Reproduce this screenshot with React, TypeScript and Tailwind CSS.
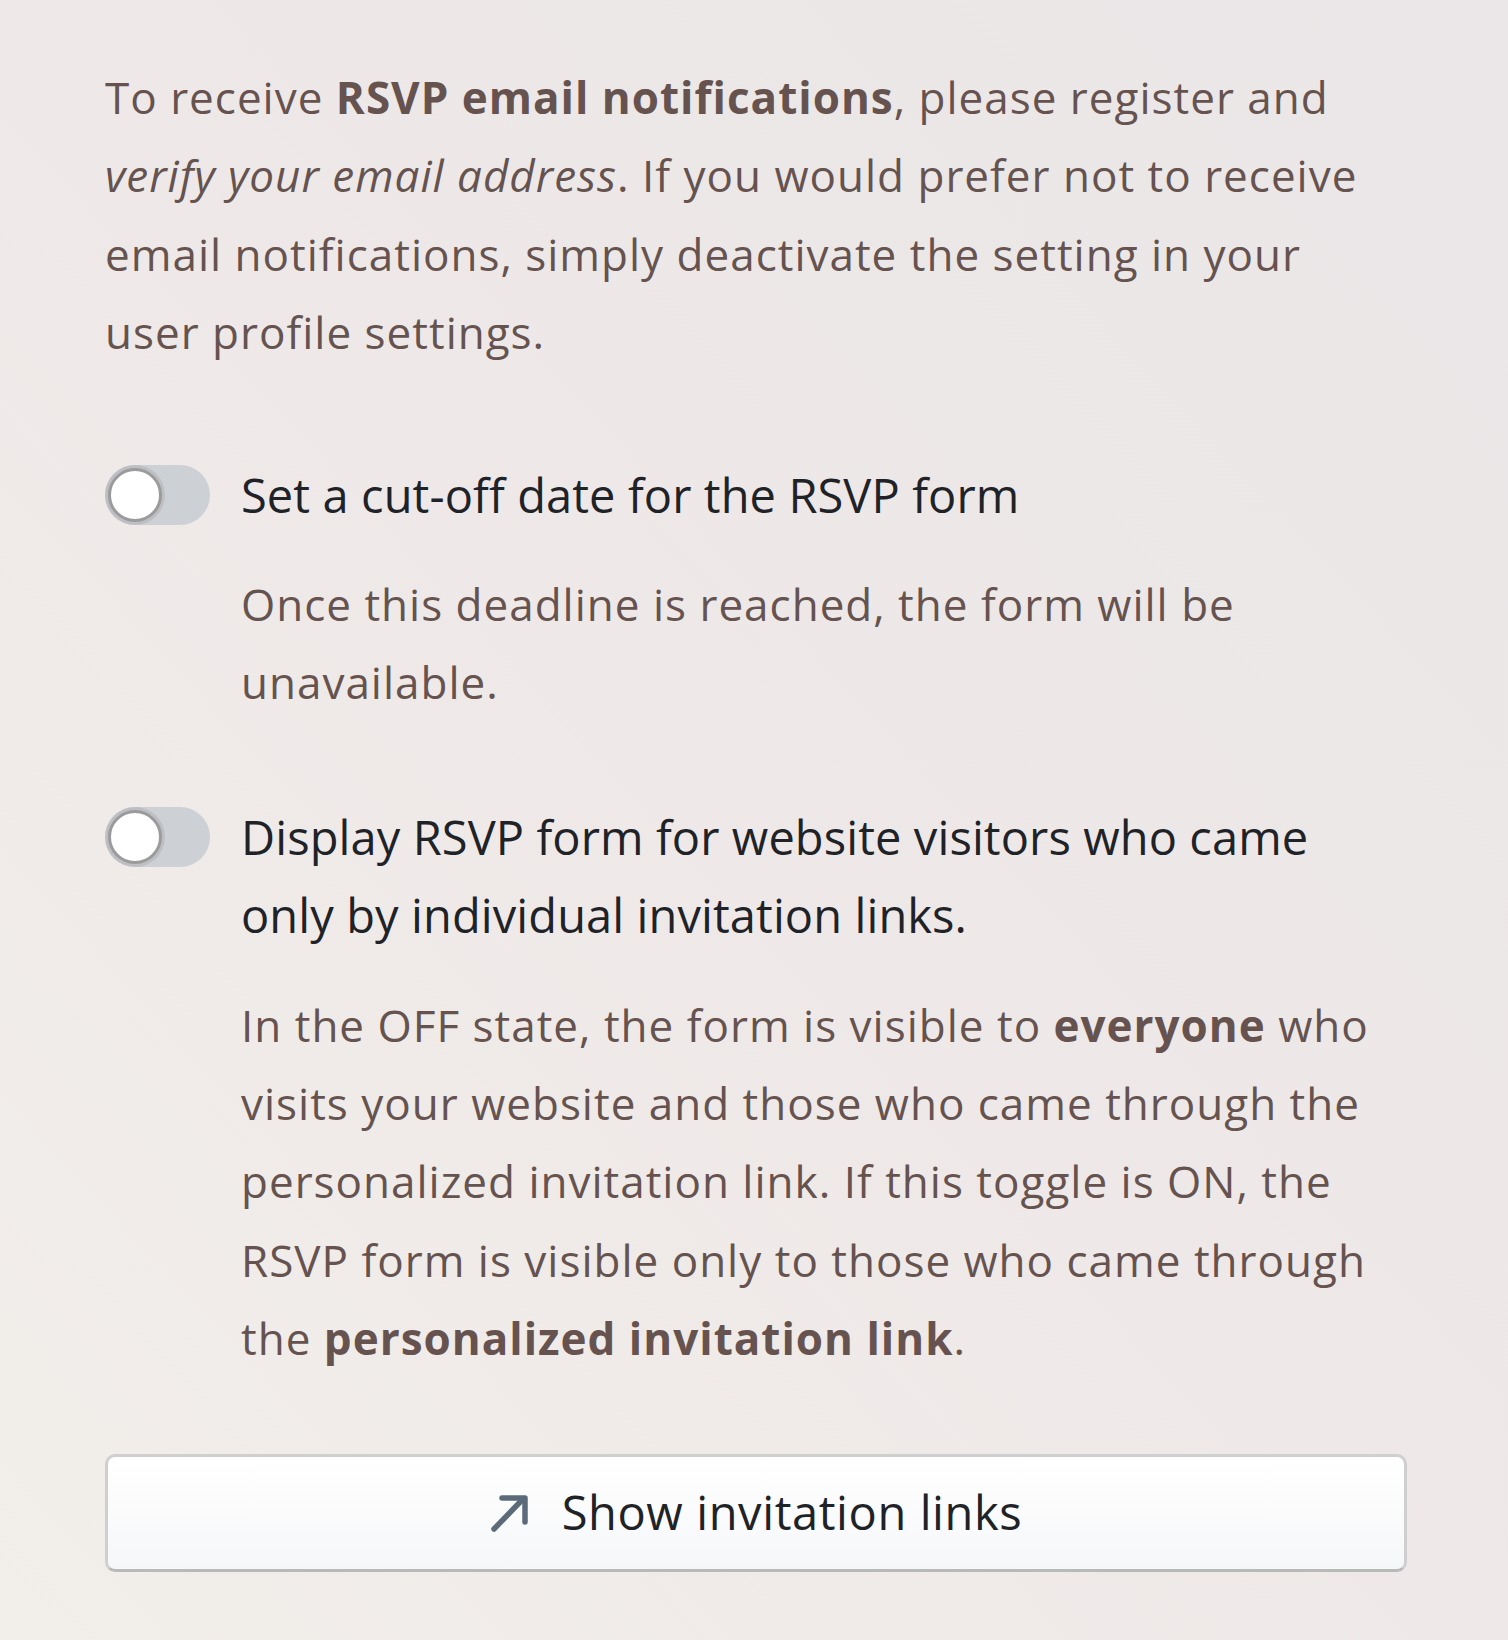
import { useState } from "react";

function Toggle({ on, onChange }: { on: boolean; onChange: () => void }) {
  return (
    <button
      type="button"
      onClick={onChange}
      className={`relative shrink-0 w-[105px] h-[60px] rounded-full mt-[9px] ${on ? "bg-[#6b7b8c]" : "bg-[#cdd0d4]"}`}
    >
      <span
        className={`absolute top-[3px] w-[54px] h-[54px] rounded-full bg-white border-[3px] border-[#9b9b9b] shadow-[0_0_0_3px_rgba(160,160,165,0.35)] ${on ? "left-[48px]" : "left-[3px]"}`}
      />
    </button>
  );
}

function Setting({
  title,
  children,
}: {
  title: string;
  children: React.ReactNode;
}) {
  const [on, setOn] = useState(false);
  return (
    <div>
      <div className="flex gap-[31px]">
        <Toggle on={on} onChange={() => setOn(!on)} />
        <p className="text-[47px] tracking-[0.1px] text-[#1f2328] pr-[40px]">{title}</p>
      </div>
      {/* Help text, aligned with the title */}
      <p className="pl-[136px] mt-[31px] text-[#66534f]">{children}</p>
    </div>
  );
}

export default function App() {
  return (
    <div className="min-h-screen bg-gradient-to-bl from-[#ebe6e7] via-[#eee9e8] to-[#f2eeea] font-['Open_Sans',sans-serif] text-[44px] tracking-[1px] leading-[78.4px]">
      <div className="pl-[105px] pr-[101px] pt-[58px] pb-[68px]">
        {/* Intro */}
        <p className="text-[#66534f]">
          To receive <b className="font-bold">RSVP email notifications</b>, please register and{" "}
          <i>verify your email address</i>. If you would prefer not to receive email notifications,
          simply deactivate the setting in your user profile settings.
        </p>

        <div className="mt-[84px]">
          <Setting title="Set a cut-off date for the RSVP form">
            Once this deadline is reached, the form will be unavailable.
          </Setting>
        </div>

        <div className="mt-[76px]">
          <Setting title="Display RSVP form for website visitors who came only by individual invitation links.">
            In the OFF state, the form is visible to <b className="font-bold">everyone</b> who visits your
            website and those who came through the personalized invitation link. If this toggle is ON, the
            RSVP form is visible only to those who came through the{" "}
            <b className="font-bold">personalized invitation link</b>.
          </Setting>
        </div>

        {/* Action */}
        <button
          type="button"
          className="mt-[76px] w-full h-[118px] flex items-center justify-center gap-[32px] rounded-[10px] border-[3px] border-[#cfcfcf] border-b-[#b9b9b9] bg-gradient-to-b from-white to-[#f6f7f9] text-[47px] tracking-[0.6px] text-[#1f2328]"
        >
          <svg width="40" height="40" viewBox="0 0 40 40" fill="none" stroke="#5c6b7a" strokeWidth="5.5" strokeLinecap="round" strokeLinejoin="round">
            <path d="M4 36 L33 6" />
            <path d="M12 5 H35 V29" />
          </svg>
          Show invitation links
        </button>
      </div>
    </div>
  );
}
